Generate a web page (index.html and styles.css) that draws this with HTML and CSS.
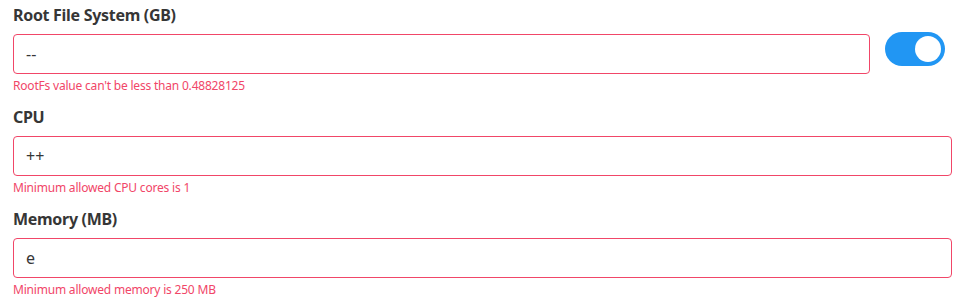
FILE: index.html
```html
<!DOCTYPE html>
<html>
<head>
<meta charset="utf-8">
<link rel="stylesheet" href="styles.css">
</head>
<body>
<form class="form">
  <div class="field">
    <label class="label">Root File System (GB)</label>
    <div class="row">
      <input class="input is-danger" type="text" value="--">
      <label class="switch"><input type="checkbox" checked><span class="slider"></span></label>
    </div>
    <p class="help">RootFs value can't be less than 0.48828125</p>
  </div>
  <div class="field">
    <label class="label">CPU</label>
    <input class="input is-danger" type="text" value="++">
    <p class="help">Minimum allowed CPU cores is 1</p>
  </div>
  <div class="field">
    <label class="label">Memory (MB)</label>
    <input class="input is-danger" type="text" value="e">
    <p class="help">Minimum allowed memory is 250 MB</p>
  </div>
</form>
</body>
</html>
```
FILE: styles.css
```css
html, body {
  margin: 0;
  padding: 0;
  background: #fff;
}
body {
  font-family: "Noto Sans", "Open Sans", sans-serif;
  color: #363636;
}
.form {
  padding: 3px 14px 0 13px;
}
.field {
  margin-bottom: 10px;
}
.label {
  display: block;
  font-size: 16px;
  font-weight: 700;
  line-height: 24px;
  letter-spacing: -0.3px;
  color: #363636;
  margin-bottom: 7px;
}
.row {
  display: flex;
  align-items: flex-start;
  gap: 15px;
}
.input {
  box-sizing: border-box;
  display: block;
  width: 100%;
  height: 40px;
  border: 1px solid #f14668;
  border-radius: 4px;
  padding: 0 12px;
  font-family: inherit;
  font-size: 16px;
  color: #363636;
  background: #fff;
  outline: none;
}
.row .input {
  flex: 1;
  width: auto;
}
.help {
  margin: 3px 0 0;
  font-size: 12px;
  line-height: 18px;
  letter-spacing: -0.2px;
  color: #f14668;
}
.switch {
  position: relative;
  display: block;
  width: 60px;
  height: 34px;
  margin-top: -2px;
  margin-right: 7px;
  flex: none;
}
.switch input {
  opacity: 0;
  width: 0;
  height: 0;
  margin: 0;
}
.slider {
  position: absolute;
  inset: 0;
  background: #2196f3;
  border-radius: 17px;
}
.slider::before {
  content: "";
  position: absolute;
  width: 26px;
  height: 26px;
  right: 4px;
  top: 4px;
  border-radius: 50%;
  background: #fff;
}
```
